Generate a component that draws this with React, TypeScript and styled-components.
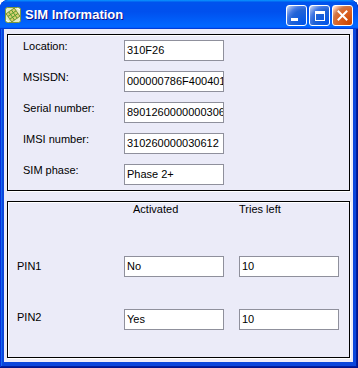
import { Fragment } from 'react';
import styled, { createGlobalStyle } from 'styled-components';

const GlobalStyle = createGlobalStyle`
  html, body {
    margin: 0;
    padding: 0;
    background: #ffffff;
  }
  * {
    box-sizing: border-box;
  }
`;

const Window = styled.div`
  width: 358px;
  height: 368px;
  display: flex;
  flex-direction: column;
  background: #0a46dc;
  border-radius: 8px 8px 0 0;
  box-shadow: inset -1px -1px #00138c, inset 1px 1px #0831d9, inset -2px -2px #001ea0, inset 2px 2px #166aee;
  font-family: 'Liberation Sans', Arial, sans-serif;
  font-size: 11px;
  color: #000;
  overflow: hidden;
`;

const TitleBar = styled.div`
  height: 29px;
  flex: none;
  display: flex;
  align-items: center;
  padding: 0 5px 0 5px;
  background: linear-gradient(180deg, #0997ff, #0053ee 8%, #0050ee 40%, #06f 88%, #06f 93%, #005bff 95%, #003dd7 96%, #003dd7);
  border-radius: 8px 8px 0 0;
`;

const TitleText = styled.span`
  flex: 1;
  margin-left: 4px;
  font-family: 'Liberation Sans', Arial, sans-serif;
  font-weight: bold;
  font-size: 13px;
  color: #fff;
  text-shadow: 1px 1px #0f1089;
`;

const Controls = styled.div`
  display: flex;
  gap: 2px;
  margin-top: 2px;
`;

const ControlButton = styled.div<{ $close?: boolean }>`
  width: 21px;
  height: 21px;
  position: relative;
  border: 1px solid #fff;
  border-radius: 3px;
  background: ${({ $close }) =>
    $close
      ? 'radial-gradient(circle at 90% 90%, #cc4600 0%, #dc6527 55%, #cd7546 70%, #ffccb2 90%, #fff 100%)'
      : 'radial-gradient(circle at 90% 90%, #0054e9 0%, #2263d5 55%, #4479e4 70%, #a3bbec 90%, #fff 100%)'};
  display: flex;
  align-items: center;
  justify-content: center;
`;

const MinGlyph = styled.div`
  position: absolute;
  left: 4px;
  bottom: 4px;
  width: 7px;
  height: 3px;
  background: #fff;
`;

const MaxGlyph = styled.div`
  width: 10px;
  height: 10px;
  border: 1px solid #fff;
  border-top-width: 3px;
`;

const Client = styled.div`
  flex: 1;
  margin: 0 5px 6px 4px;
  padding: 5px 3px 4px 3px;
  background: #ebebf8;
  display: flex;
  flex-direction: column;
  gap: 10px;
`;

const Panel = styled.div`
  height: 157px;
  border: 1px solid #000;
  box-shadow: 1px 1px 0 #fff, inset 1px 1px 0 #fff;
`;

const InfoPanel = styled(Panel)`
  display: flex;
  flex-direction: column;
  gap: 10px;
  padding: 5px 0 0 15px;
`;

const InfoRow = styled.div`
  display: flex;
  align-items: flex-start;
`;

const InfoLabel = styled.div`
  width: 101px;
  line-height: 13px;
`;

const Field = styled.div`
  width: 100px;
  height: 21px;
  padding: 3px 2px;
  line-height: 13px;
  background: #fff;
  border: 1px solid #8f909c;
  white-space: nowrap;
  overflow: hidden;
`;

const PinPanel = styled(Panel)`
  display: grid;
  grid-template-columns: 92px 100px 100px;
  column-gap: 15px;
  align-content: start;
  padding: 1px 0 0 9px;
`;

const ColumnHead = styled.div<{ $indent?: number }>`
  line-height: 13px;
  padding-left: ${({ $indent }) => $indent ?? 0}px;
`;

const PinLabel = styled.div<{ $offset: number; $top: number }>`
  line-height: 13px;
  margin-top: ${({ $top }) => $top}px;
  padding-top: ${({ $offset }) => $offset}px;
`;

const PinField = styled(Field)<{ $top: number }>`
  margin-top: ${({ $top }) => $top}px;
`;

const SimIcon = () => (
  <svg width="16" height="16" viewBox="0 0 16 16">
    <rect x="0.5" y="0.5" width="15" height="15" rx="2" fill="#e6ecc0" stroke="#7e9a3a" />
    <g transform="rotate(-35 8 8)">
      <rect x="3" y="3" width="10" height="10" fill="#d8cf70" stroke="#6c8a2c" strokeWidth="0.8" />
      <path d="M3 6.3h10M3 9.6h10M6.3 3v10M9.6 3v10" stroke="#4f9a2c" strokeWidth="0.9" />
    </g>
    <path d="M1 13l3 2M12 1l3 2" stroke="#fff" strokeWidth="1" />
  </svg>
);

const CloseGlyph = () => (
  <svg width="11" height="11" viewBox="0 0 11 11">
    <path d="M1.5 1.5l8 8M9.5 1.5l-8 8" stroke="#fff" strokeWidth="2" strokeLinecap="square" />
  </svg>
);

const info = [
  { label: 'Location:', value: '310F26' },
  { label: 'MSISDN:', value: '000000786F400401' },
  { label: 'Serial number:', value: '8901260000000306' },
  { label: 'IMSI number:', value: '310260000030612' },
  { label: 'SIM phase:', value: 'Phase 2+' },
];

const pins = [
  { name: 'PIN1', activated: 'No', tries: '10', top: 40, offset: 4 },
  { name: 'PIN2', activated: 'Yes', tries: '10', top: 32, offset: 2 },
];

const App = () => (
  <>
    <GlobalStyle />
    <Window>
      <TitleBar>
        <SimIcon />
        <TitleText>SIM Information</TitleText>
        <Controls>
          <ControlButton>
            <MinGlyph />
          </ControlButton>
          <ControlButton>
            <MaxGlyph />
          </ControlButton>
          <ControlButton $close>
            <CloseGlyph />
          </ControlButton>
        </Controls>
      </TitleBar>
      <Client>
        <InfoPanel>
          {info.map((row) => (
            <InfoRow key={row.label}>
              <InfoLabel>{row.label}</InfoLabel>
              <Field>{row.value}</Field>
            </InfoRow>
          ))}
        </InfoPanel>
        <PinPanel>
          <div />
          <ColumnHead $indent={9}>Activated</ColumnHead>
          <ColumnHead>Tries left</ColumnHead>
          {pins.map((pin) => (
            <Fragment key={pin.name}>
              <PinLabel $top={pin.top} $offset={pin.offset}>
                {pin.name}
              </PinLabel>
              <PinField $top={pin.top}>{pin.activated}</PinField>
              <PinField $top={pin.top}>{pin.tries}</PinField>
            </Fragment>
          ))}
        </PinPanel>
      </Client>
    </Window>
  </>
);

export default App;
